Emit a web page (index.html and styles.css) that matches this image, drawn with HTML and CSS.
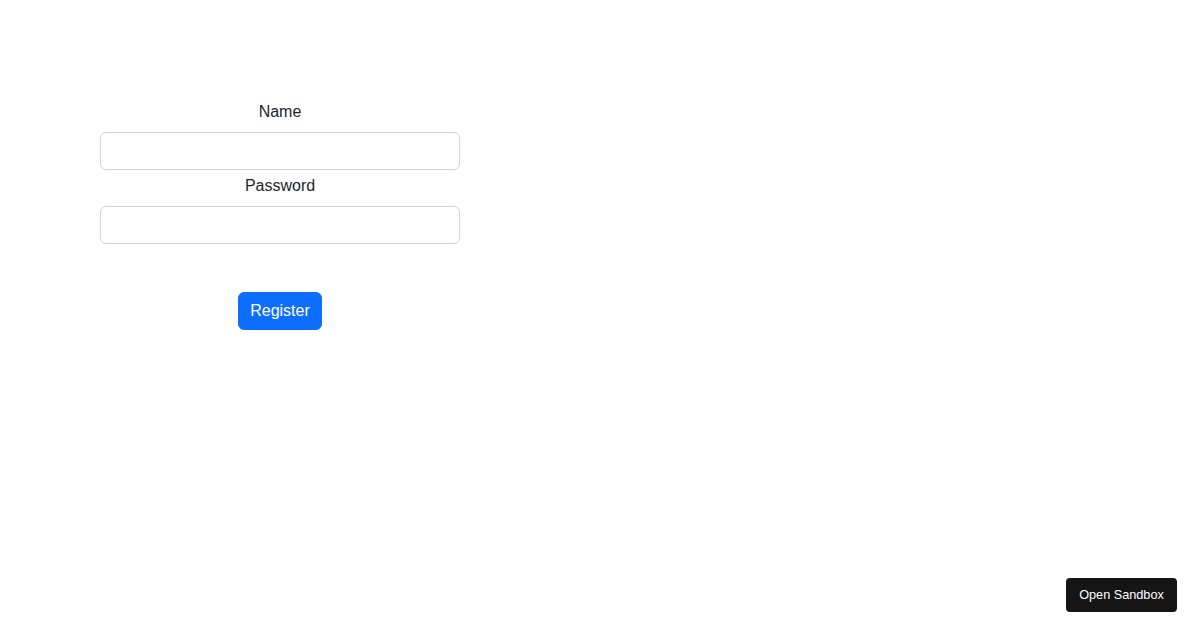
FILE: index.html
```html
<!DOCTYPE html>
<html>
<head>
<meta charset="utf-8">
<link rel="stylesheet" href="styles.css">
</head>
<body>
<form class="form">
  <label class="label" for="name">Name</label>
  <input class="input" id="name" type="text">
  <label class="label label-second" for="password">Password</label>
  <input class="input" id="password" type="password">
  <div class="actions">
    <button class="btn" type="button">Register</button>
  </div>
</form>
<a class="sandbox" href="#">Open Sandbox</a>
</body>
</html>
```

FILE: styles.css
```css
html, body {
  margin: 0;
  padding: 0;
  background: #fff;
}
body {
  font-family: "Liberation Sans", Arial, sans-serif;
  font-size: 16px;
  line-height: 24px;
  color: #212529;
  width: 1200px;
  height: 630px;
  position: relative;
}
.form {
  width: 360px;
  margin-left: 100px;
  padding-top: 100px;
  display: flex;
  flex-direction: column;
}
.label {
  display: block;
  text-align: center;
  margin-bottom: 8px;
}
.label-second {
  margin-top: 4px;
}
.input {
  box-sizing: border-box;
  width: 360px;
  height: 38px;
  border: 1px solid #ced4da;
  border-radius: 6px;
  padding: 6px 12px;
  font: inherit;
  margin: 0;
  background: #fff;
}
.actions {
  display: flex;
  justify-content: center;
  margin-top: 48px;
}
.btn {
  box-sizing: border-box;
  height: 38px;
  width: 84px;
  background: #0d6efd;
  color: #fff;
  border: 1px solid #0d6efd;
  border-radius: 6px;
  font: inherit;
  padding: 0;
}
.sandbox {
  position: absolute;
  right: 23px;
  bottom: 18px;
  box-sizing: border-box;
  width: 111px;
  height: 34px;
  background: #151515;
  color: #fff;
  border-radius: 4px;
  font-size: 12.7px;
  line-height: 34px;
  text-align: center;
  text-decoration: none;
}
```
